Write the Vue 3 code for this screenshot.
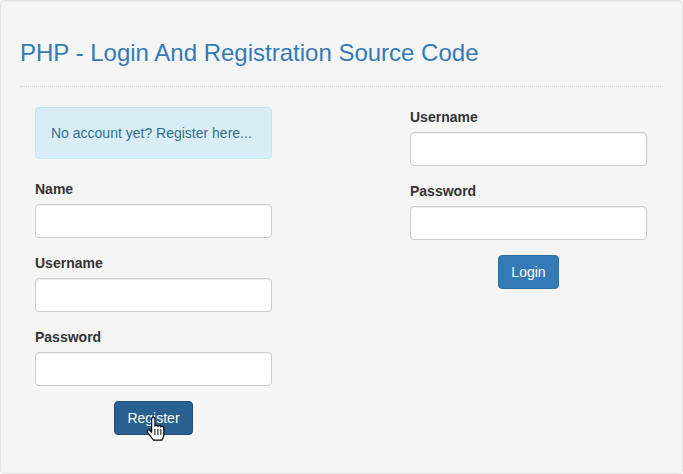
<script setup>
const fields = ['Name', 'Username', 'Password']
const loginFields = ['Username', 'Password']
</script>

<template>
  <div class="well">
    <h3 class="title">PHP - Login And Registration Source Code</h3>
    <hr class="rule" />
    <div class="columns">
      <form class="col" @submit.prevent>
        <div class="alert">No account yet? Register here...</div>
        <div v-for="f in fields" :key="f" class="group">
          <label class="label">{{ f }}</label>
          <input class="input" type="text" />
        </div>
        <div class="actions">
          <button class="btn hover" type="button">
            Register
            <svg class="hand" width="20" height="26" viewBox="0 0 18 24">
              <path d="M5 2.500c0-2 3-2 3 0V9.500c0-1.200 2.800-1.200 2.800.3 0-1.200 2.700-1.200 2.700.4 0-1 2.700-1 2.700.6V17c0 2.400-1.200 3.600-1.600 5.200H6.500C5.200 20 3 18 1.200 15c-1-1.700 1-3 2.300-1.600L5 15z" fill="#fff" stroke="#000" stroke-width="1.100" stroke-linejoin="round"/>
              <path d="M8 12v5.500M10.800 12v5.500M13.500 12v5.500" stroke="#000" stroke-width=".9" fill="none"/>
            </svg>
          </button>
        </div>
      </form>
      <form class="col" @submit.prevent>
        <div v-for="f in loginFields" :key="f" class="group">
          <label class="label">{{ f }}</label>
          <input class="input" type="text" />
        </div>
        <div class="actions">
          <button class="btn" type="button">Login</button>
        </div>
      </form>
    </div>
  </div>
</template>

<style>
html, body { margin: 0; background: #fff; }
</style>

<style scoped>
.well {
  box-sizing: border-box;
  width: 683px;
  height: 474px;
  padding: 19px;
  background: #f5f5f5;
  border: 1px solid #e3e3e3;
  border-radius: 4px;
  box-shadow: inset 0 1px 1px rgba(0, 0, 0, .05);
  font: 14px/20px "Liberation Sans", Arial, sans-serif;
  color: #333;
  overflow: hidden;
}
.title {
  margin: 20px 0;
  font-size: 24px;
  font-weight: 500;
  line-height: 1.1;
  color: #337ab7;
}
.rule {
  margin: 20px 0;
  border: 0;
  border-top: 1px dotted #ccc;
}
.columns {
  display: grid;
  grid-template-columns: 237px 237px;
  column-gap: 138px;
  padding-left: 15px;
}
.alert {
  padding: 15px;
  margin-bottom: 20px;
  background: #d9edf7;
  border: 1px solid #bce8f1;
  border-radius: 4px;
  color: #31708f;
}
.group { margin-bottom: 15px; }
.label {
  display: block;
  margin-bottom: 5px;
  font-weight: 700;
}
.input {
  display: block;
  box-sizing: border-box;
  width: 100%;
  height: 34px;
  padding: 6px 12px;
  background: #fff;
  border: 1px solid #ccc;
  border-radius: 4px;
  box-shadow: inset 0 1px 1px rgba(0, 0, 0, .075);
  font: inherit;
}
.actions { display: flex; justify-content: center; }
.btn {
  position: relative;
  padding: 6px 12px;
  background: #337ab7;
  border: 1px solid #2e6da4;
  border-radius: 4px;
  color: #fff;
  font: inherit;
}
.btn.hover {
  background: #286090;
  border-color: #204d74;
}
.hand {
  position: absolute;
  left: 31px;
  top: 14px;
}
</style>
